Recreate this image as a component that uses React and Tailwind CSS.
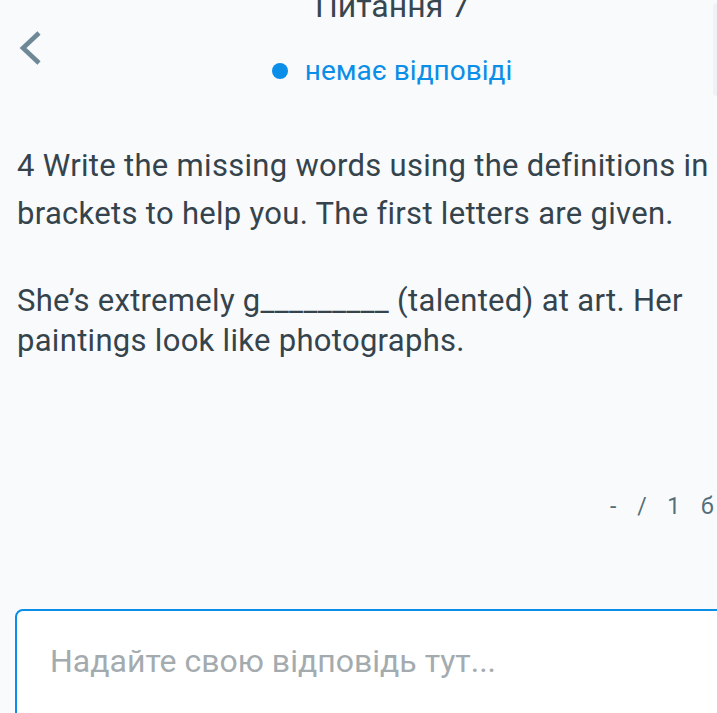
import React from "react";

const font = { fontFamily: "Roboto, 'Noto Sans', sans-serif" };

function BackChevron() {
    return (
        <svg width="26" height="34" viewBox="0 0 26 34" fill="none">
            <path d="M21 2 L5 17 L21 32" stroke="#6f8896" strokeWidth="4.6" strokeLinecap="butt" strokeLinejoin="miter" />
        </svg>
    );
}

export default function App() {
    return (
        <div className="relative w-[717px] h-[713px] overflow-hidden bg-[#f8fafc]" style={font}>
            <div className="w-[784px] flex flex-col">
                {/* Header */}
                <header className="flex items-start -mt-[6px]">
                    <div className="w-[60px] pl-[18px] pt-[37px]">
                        <BackChevron />
                    </div>
                    <div className="flex-1 flex flex-col items-center">
                        <div className="-mt-[4px] mb-[4px] text-[32px] leading-[32px] text-[#37474f]">Питання 7</div>
                        <div className="mt-[29px] flex items-center gap-[17px]">
                            <span className="h-4 w-4 rounded-full bg-[#0a8ee8]" />
                            <span className="text-[28px] leading-[32px] text-[#0a8ee8]">немає відповіді</span>
                        </div>
                    </div>
                    <div className="w-[60px]" />
                </header>

                {/* Question */}
                <section className="px-[17px] mt-[55px] text-[31px] tracking-[0.3px] text-[#35444c]">
                    <p className="leading-[48px]">
                        4 Write the missing words using the definitions in brackets to help you. The first letters are given.
                    </p>
                    <p className="mt-[43px] leading-[40px]">
                        She’s extremely g_________ (talented) at art. Her paintings look like photographs.
                    </p>
                </section>

                {/* Score */}
                <div className="mt-[135px] pr-[22px] flex justify-end">
                    <span className="text-[23px] leading-[22px] tracking-[7.5px] text-[#546e7a]">- / 1 бал</span>
                </div>

                {/* Answer */}
                <div className="mt-[91px] px-[15px]">
                    <textarea
                        className="block w-full h-[150px] resize-none rounded-[8px] border-2 border-[#0a8ee8] bg-white pl-[33px] pt-[26px] text-[32px] leading-[48px] text-[#37474f] outline-none placeholder:text-[#a4abaf]"
                        style={font}
                        placeholder="Надайте свою відповідь тут..."
                    />
                </div>
            </div>

            {/* faint edge of side panel */}
            <div className="absolute left-[713px] top-[3px] h-[93px] w-[12px] rounded-l bg-[#eef2f6]" />
        </div>
    );
}
